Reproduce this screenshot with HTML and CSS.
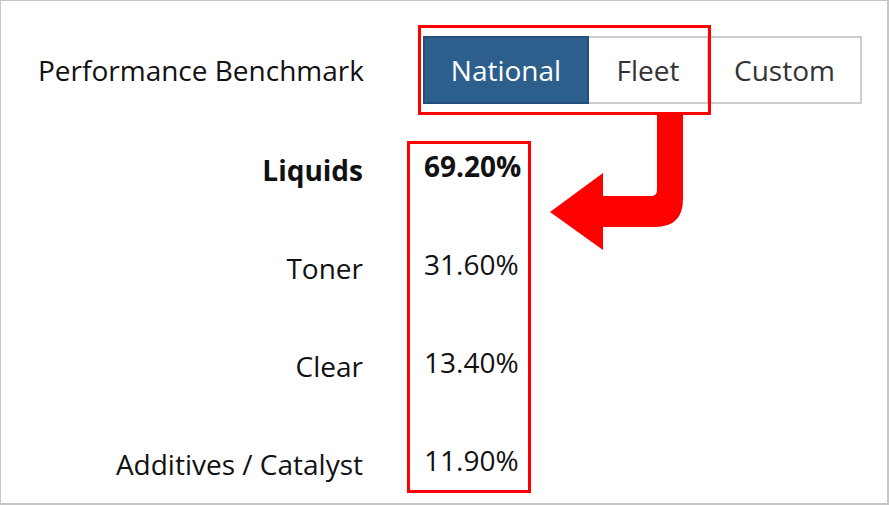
FILE: index.html
```html
<!DOCTYPE html>
<html>
<head>
<meta charset="utf-8">
<link rel="stylesheet" href="styles.css">
</head>
<body>
<div class="frame">
  <div class="header">
    <div class="label">Performance Benchmark</div>
    <div class="btn-group">
      <div class="btn active">National</div>
      <div class="btn">Fleet</div>
      <div class="btn">Custom</div>
    </div>
  </div>
  <div class="rows">
    <div class="row total"><div class="label">Liquids</div><div class="value">69.20%</div></div>
    <div class="row"><div class="label">Toner</div><div class="value">31.60%</div></div>
    <div class="row"><div class="label">Clear</div><div class="value">13.40%</div></div>
    <div class="row"><div class="label">Additives / Catalyst</div><div class="value">11.90%</div></div>
  </div>
  <div class="hl hl-buttons"></div>
  <div class="hl hl-values"></div>
  <svg class="arrow" width="890" height="505" viewBox="0 0 890 505">
    <path d="M657,113 L683,113 L683,199 Q683,227 655,227 L603,227 L603,250 L550,212 L603,173 L603,196 L651,196 Q657,196 657,190 Z" fill="#ff0000"/>
  </svg>
</div>
</body>
</html>
```
FILE: styles.css
```css
html, body {
  margin: 0;
  padding: 0;
  background: #fff;
}
.frame {
  position: relative;
  width: 889px;
  height: 505px;
  box-sizing: border-box;
  border: 2px solid #c6c6c6;
  border-left-width: 1px;
  border-top-width: 1px;
  font-family: "Open Sans", sans-serif;
  color: #111;
  overflow: hidden;
}
.header {
  display: flex;
  align-items: center;
  padding-top: 35px;
}
.label {
  width: 362px;
  text-align: right;
  font-size: 28px;
  flex: none;
}
.header .label {
  text-align: left;
  padding-left: 37px;
  width: 422px;
  box-sizing: border-box;
}
.btn-group {
  display: flex;
  height: 68px;
}
.btn {
  display: flex;
  align-items: center;
  justify-content: center;
  font-size: 28px;
  color: #333;
  border: 2px solid #cccccc;
  box-sizing: border-box;
  background: #fff;
}
.btn:nth-child(1) { width: 166px; }
.btn:nth-child(2) { width: 118px; border-left: none; border-right: none; }
.btn:nth-child(3) { width: 155px; }
.btn.active {
  background: #2c5f8c;
  border-color: #22507b;
  color: #fff;
}
.rows {
  display: flex;
  flex-direction: column;
  padding-top: 47px;
}
.row {
  display: flex;
  height: 98px;
  align-items: flex-start;
}
.value {
  padding-left: 61px;
  font-size: 28px;
  margin-top: -4px;
}
.total .label, .total .value {
  font-weight: 700;
}
.hl {
  position: absolute;
  border: 3px solid #ff0000;
  box-sizing: border-box;
}
.hl-buttons {
  left: 417px;
  top: 24px;
  width: 293px;
  height: 90px;
}
.hl-values {
  left: 406px;
  top: 140px;
  width: 124px;
  height: 352px;
}
.arrow {
  position: absolute;
  left: -1px;
  top: -1px;
}
```
